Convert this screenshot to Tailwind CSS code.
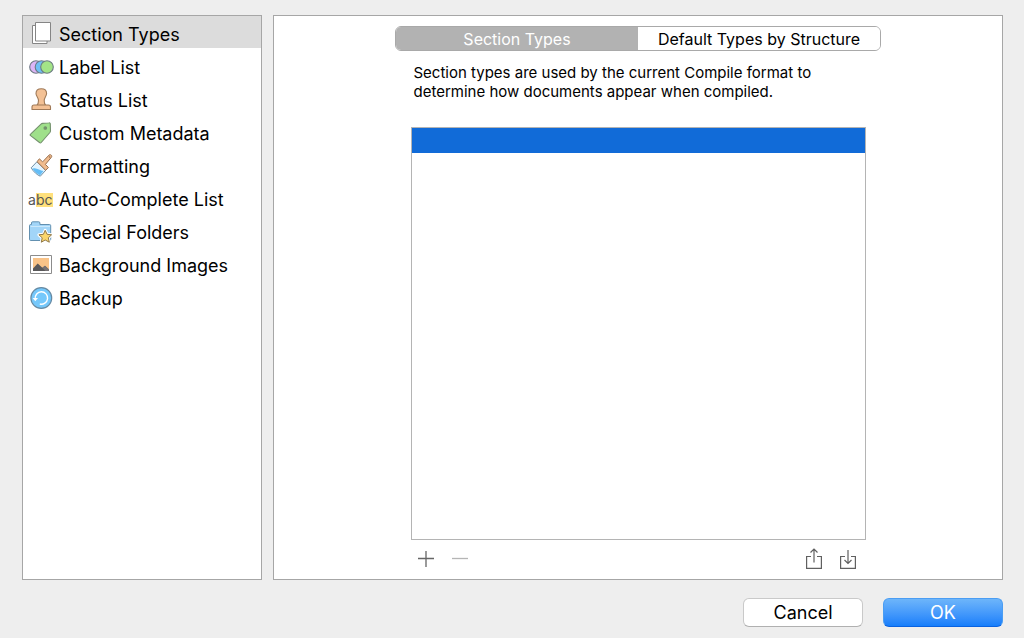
<!DOCTYPE html>
<html lang="en">
<head>
  <meta charset="UTF-8" />
  <meta name="viewport" content="width=device-width, initial-scale=1" />
  <title>Project Settings</title>
  <script src="https://cdn.jsdelivr.net/npm/@tailwindcss/browser@4"></script>
</head>
<body class="flex flex-col min-h-screen bg-[#eeeeee] pt-[15px] pb-[11px] pl-[22px] pr-[21px] text-black font-[Inter,'Liberation_Sans',sans-serif]">
  <div class="flex flex-1 gap-[11px]">

    <!-- Sidebar -->
    <nav class="w-60 shrink-0 bg-white border border-[#a6a6a6]">
      <ul class="space-y-px text-lg">
        <li>
          <button type="button" aria-current="page" class="flex items-center w-full h-8 pt-[5px] pl-[5px] gap-[5px] bg-[#dcdcdc] text-left">
            <svg class="w-[26px] h-[27px] shrink-0" viewBox="0 0 26 27" fill="#fff" stroke="#858585">
              <path d="M4.500 4.500h14.500v18h-14.500z" />
              <path d="M7.500 1.500h15v18.500h-15z" />
            </svg>
            Section Types
          </button>
        </li>
        <li>
          <button type="button" class="flex items-center w-full h-8 pt-[5px] pl-[5px] gap-[5px] text-left">
            <svg class="w-[26px] h-[27px] shrink-0" viewBox="0 0 26 27" stroke="#6c7a83" stroke-width="1.1">
              <circle cx="8" cy="13" r="6.300" fill="#dcb5f5" />
              <circle cx="13.500" cy="13" r="6.300" fill="#6fc0f5" />
              <circle cx="19" cy="13" r="6.300" fill="#a3e487" />
            </svg>
            Label List
          </button>
        </li>
        <li>
          <button type="button" class="flex items-center w-full h-8 pt-[5px] pl-[5px] gap-[5px] text-left">
            <svg class="w-[26px] h-[27px] shrink-0" viewBox="0 0 26 27" fill="#f3c195" stroke="#a07a58" stroke-width="1.1" stroke-linejoin="round">
              <path d="M8 6.500C8 3.500 10 1.700 13.300 1.700S18.600 3.500 18.600 6.500c0 2.500-2.400 4-2.400 7 0 2 .5 4 1.500 5H8.900c1-1 1.600-3 1.600-5 0-3-2.500-4.500-2.500-7z" />
              <path d="M6 18h14.500c1.500 0 2 .7 2 2v2.500h-18.500V20c0-1.300.5-2 2-2z" />
            </svg>
            Status List
          </button>
        </li>
        <li>
          <button type="button" class="flex items-center w-full h-8 pt-[5px] pl-[5px] gap-[5px] text-left">
            <svg class="w-[26px] h-[27px] shrink-0" viewBox="0 0 26 27" fill="#9fe08a" stroke="#74906d" stroke-width="1.1" stroke-linejoin="round">
              <path d="M2.600 14.200 13 4.200c.5-.5 1-.7 1.700-.8l6.300-.6c.8-.1 1.300.4 1.300 1.200l.2 6.800c0 .7-.2 1.200-.6 1.700l-8.700 10c-.5.600-1.200.600-1.700 0l-8.900-6.900c-.6-.4-.6-1 0-1.400z" />
              <circle cx="17.300" cy="8" r="1.300" fill="#719568" />
            </svg>
            Custom Metadata
          </button>
        </li>
        <li>
          <button type="button" class="flex items-center w-full h-8 pt-[5px] pl-[5px] gap-[5px] text-left">
            <svg class="w-[26px] h-[27px] shrink-0" viewBox="0 0 26 27" stroke-linejoin="round">
              <path d="M9 8.700 17.700 17.300 12.300 23.200C9.200 22 5.200 18.500 3.200 14.800z" fill="#e2f4ff" stroke="#6d8ea6" />
              <path d="M4.500 15.700c4-1.700 7 2.200 11 2.300l-3.300 4.300c-2.800-1.300-5.600-3.500-7.700-6.600z" fill="#65bdf5" />
              <path d="M11.400 5.800 14.600 8.900 21 2.100c1.700-1.300 3.600.6 2.300 2.300L17.400 11.400l3 3.100-2.700 2.800L9 8.700z" fill="#f1bc8e" stroke="#99704f" />
              <path d="M21.300 4h.6" stroke="#805b3f" stroke-linecap="round" />
            </svg>
            Formatting
          </button>
        </li>
        <li>
          <button type="button" class="flex items-center w-full h-8 pt-[5px] pl-[5px] gap-[5px] text-left">
            <span class="flex w-[26px] shrink-0 text-sm leading-[14px] text-[#555555]" aria-hidden="true">a<span class="bg-[#ffe07c] pr-px">bc</span></span>
            Auto-Complete List
          </button>
        </li>
        <li>
          <button type="button" class="flex items-center w-full h-8 pt-[5px] pl-[5px] gap-[5px] text-left">
            <svg class="w-[26px] h-[27px] shrink-0" viewBox="0 0 26 27" stroke-linejoin="round">
              <path d="M3.500 5.500V4c0-.8.4-1.200 1.200-1.200h6c.8 0 1.200.4 1.200 1.200v1.500h9.600c.8 0 1.200.4 1.200 1.200v13.600c0 .8-.4 1.200-1.200 1.200H2.700c-.8 0-1.200-.4-1.200-1.200V6.700c0-.8.4-1.200 1.200-1.200z" fill="#a2d5f8" stroke="#6390b0" />
              <path d="M2.500 7.500h19.500" stroke="#cbe9fc" />
              <path d="m17.200 11.300 1.900 4 4.500.5-3.300 3 1 4.400-4.100-2.200-3.900 2.200.9-4.400-3.300-3 4.500-.5z" fill="#fbd66b" stroke="#fff" stroke-width="3" />
              <path d="m17.200 11.300 1.900 4 4.500.5-3.300 3 1 4.400-4.100-2.200-3.900 2.200.9-4.400-3.300-3 4.500-.5z" fill="#fbd66b" stroke="#8f7848" />
            </svg>
            Special Folders
          </button>
        </li>
        <li>
          <button type="button" class="flex items-center w-full h-8 pt-[5px] pl-[5px] gap-[5px] text-left">
            <svg class="w-[26px] h-[27px] shrink-0" viewBox="0 0 26 27">
              <path d="M2.500 3.500h21v18h-21z" fill="#fff" stroke="#8c8c8c" />
              <path d="M5 6h16v13H5z" fill="#f9c388" />
              <path d="M5 16.500 9.700 11.500l4.700 4.300 2.600-2 4 3.700V19H5z" fill="#595859" />
              <path d="m14.300 15.800 2.700-2 4 3.700V19h-3.500z" fill="#777274" />
            </svg>
            Background Images
          </button>
        </li>
        <li>
          <button type="button" class="flex items-center w-full h-8 pt-[5px] pl-[5px] gap-[5px] text-left">
            <svg class="w-[26px] h-[27px] shrink-0" viewBox="0 0 26 27" fill="none">
              <circle cx="13.300" cy="13" r="10.400" fill="#75c8fb" stroke="#6689a2" stroke-width="1.200" />
              <path d="M7.300 14a6.200 6.200 0 1 1 4.500 5" stroke="#fff" stroke-width="1.400" />
              <path d="M4.600 13h5.400l-2.700 3.300z" fill="#fff" />
            </svg>
            Backup
          </button>
        </li>
      </ul>
    </nav>

    <!-- Content -->
    <main class="flex flex-col items-center flex-1 bg-white border border-[#a6a6a6] pt-[10px] pb-[5px]">
      <div class="grid grid-cols-2 w-full max-w-[486px] h-[25px] rounded-md border border-[#a9a9a9] overflow-hidden text-base" role="tablist">
        <button type="button" role="tab" aria-selected="true" class="pb-[2px] bg-[#b2b2b2] text-white">Section Types</button>
        <button type="button" role="tab" aria-selected="false" class="pb-[2px] bg-white">Default Types by Structure</button>
      </div>

      <div class="flex flex-col flex-1 w-full max-w-[455px]">
        <p class="mt-3 pl-[3px] text-[15px] leading-[19px]">
          Section types are used by the current Compile format to<br />
          determine how documents appear when compiled.
        </p>

        <ul class="flex-1 mt-[26px] border border-[#b4b4b4]" role="listbox" aria-label="Section types">
          <li class="h-[25px] bg-[#116bd8]" role="option" aria-selected="true"></li>
        </ul>

        <div class="flex items-center h-[31px] mt-[3px] px-1">
          <button type="button" aria-label="Add" class="p-[3px]">
            <svg class="w-4 h-4" viewBox="0 0 16 16" stroke="#666" stroke-width="1.300"><path d="M0 7.500h16M8 0v16" /></svg>
          </button>
          <button type="button" aria-label="Remove" class="p-[3px] ml-3">
            <svg class="w-4 h-4" viewBox="0 0 16 16" stroke="#b5b5b5" stroke-width="1.300"><path d="M0 7.500h16" /></svg>
          </button>
          <button type="button" aria-label="Export" class="ml-auto">
            <svg class="w-[18px] h-[22px]" viewBox="0 0 18 22" fill="none" stroke="#606060" stroke-width="1.200"><path d="M6 8.500H1.600v11.800h14.800V8.500H12M9 14.500V1M5.500 4.500 9 1l3.500 3.500" /></svg>
          </button>
          <button type="button" aria-label="Import" class="ml-4 mr-[5px]">
            <svg class="w-[18px] h-[22px]" viewBox="0 0 18 22" fill="none" stroke="#606060" stroke-width="1.200"><path d="M6 8.500H1.600v11.800h14.800V8.500H12M9 2v13.500M5.500 12 9 15.500 12.500 12" /></svg>
          </button>
        </div>
      </div>
    </main>
  </div>

  <!-- Footer -->
  <div class="flex justify-end gap-5 mt-[18px] text-lg leading-7">
    <button type="button" class="w-[120px] h-[29px] rounded-md bg-white border border-[#c9c9c9] border-b-[#b0b0b0]">Cancel</button>
    <button type="submit" class="w-[120px] h-[29px] rounded-md bg-linear-to-b from-[#6db5fa] to-[#157efb] border border-[#4a9df3] border-b-[#0a62e0] text-white">OK</button>
  </div>
</body>
</html>
